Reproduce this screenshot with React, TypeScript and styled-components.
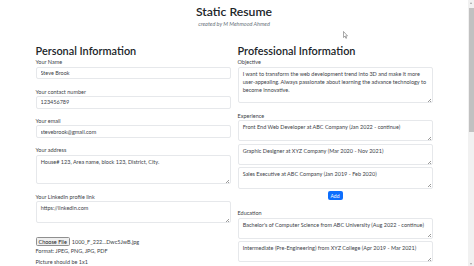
import React from 'react';
import styled, { createGlobalStyle } from 'styled-components';

const GlobalStyle = createGlobalStyle`
  html, body {
    margin: 0;
    padding: 0;
    background: #fff;
    overflow: hidden;
  }
  body {
    font-family: Lato, 'Open Sans', sans-serif;
    color: #212529;
  }
  * {
    box-sizing: border-box;
  }
`;

const Page = styled.div`
  position: relative;
  width: 474px;
  height: 266px;
  overflow: hidden;
`;

const Content = styled.main`
  width: 468px;
  padding-top: 5px;
`;

const Header = styled.header`
  text-align: center;
`;

const Title = styled.h1`
  margin: 0;
  font-size: 12.2px;
  line-height: 14px;
  font-weight: 600;
`;

const Byline = styled.p`
  margin: 1.8px 0 0;
  font-size: 5.5px;
  line-height: 7px;
  font-style: italic;
  color: #6c757d;
`;

const Columns = styled.div`
  width: 397px;
  margin: 16.9px auto 0;
  display: grid;
  grid-template-columns: 1fr 1fr;
  column-gap: 7px;
  align-items: start;
  color: #3d4349;
`;

const Column = styled.section`
  display: flex;
  flex-direction: column;
`;

const SectionTitle = styled.h2`
  margin: 0 0 1.8px;
  font-size: 10.9px;
  line-height: 12px;
  font-weight: 600;
  color: #212529;
`;

const Field = styled.div<{ $mb?: number }>`
  margin-bottom: ${(p) => p.$mb ?? 8.4}px;
`;

const Label = styled.label`
  display: block;
  font-size: 5.5px;
  line-height: 8.3px;
`;

const Input = styled.input`
  display: block;
  width: 100%;
  height: 12.6px;
  padding: 0 4px;
  border: 1px solid #e6e8eb;
  border-radius: 2px;
  font-family: inherit;
  font-size: 5.5px;
  color: #3d4349;
  background: #fff;
  outline: none;
`;

const Stack = styled.div`
  display: flex;
  flex-direction: column;
  gap: 2.3px;
`;

const AreaBox = styled.div`
  position: relative;

  &::after {
    content: '';
    position: absolute;
    right: 1.5px;
    bottom: 1.5px;
    width: 3px;
    height: 3px;
    background: linear-gradient(
      135deg,
      transparent 0 40%,
      #9a9a9a 40% 52%,
      transparent 52% 72%,
      #9a9a9a 72% 84%,
      transparent 84%
    );
  }
`;

const Area = styled.textarea<{ $h: number }>`
  display: block;
  width: 100%;
  height: ${(p) => p.$h}px;
  padding: 2.1px 4.2px;
  border: 1px solid #e6e8eb;
  border-radius: 2px;
  font-family: inherit;
  font-size: 5.5px;
  line-height: 8.3px;
  color: #3d4349;
  background: #fff;
  resize: none;
  overflow: hidden;
  white-space: pre;
  outline: none;
`;

const FileRow = styled.div`
  display: flex;
  align-items: center;
  gap: 2px;
  margin-top: 14px;
  font-size: 5.5px;
`;

const FileButton = styled.span`
  display: inline-flex;
  align-items: center;
  height: 9px;
  padding: 0 2px;
  border: 1px solid #8f8f8f;
  border-radius: 1.5px;
  background: #efefef;
  color: #222;
`;

const Hint = styled.div<{ $mt?: number }>`
  margin-top: ${(p) => p.$mt ?? 0}px;
  font-size: 5.5px;
  line-height: 7px;
`;

const AddButton = styled.button`
  align-self: center;
  width: 15px;
  height: 9.3px;
  margin: 2.5px 0 8.85px;
  padding: 0;
  border: none;
  border-radius: 2px;
  background: #0d6efd;
  color: #fff;
  font-family: inherit;
  font-size: 5px;
`;

const Cursor = styled.svg`
  position: absolute;
  left: 343px;
  top: 31px;
`;

const Scrollbar = styled.div`
  position: absolute;
  top: 0;
  right: 0;
  width: 6px;
  height: 266px;
  background: #f1f1f1;
  display: flex;
  flex-direction: column;
  align-items: center;
  justify-content: space-between;
  padding: 1.5px 0;
`;

const Arrow = styled.span<{ $down?: boolean }>`
  width: 0;
  height: 0;
  border-left: 1.5px solid transparent;
  border-right: 1.5px solid transparent;
  ${(p) => (p.$down ? 'border-top: 2px solid #a3a3a3;' : 'border-bottom: 2px solid #a3a3a3;')}
`;

const Thumb = styled.div`
  position: absolute;
  top: 8px;
  left: 0.5px;
  width: 5px;
  height: 124px;
  background: #c1c1c1;
`;

const TextArea = ({ h, value }: { h: number; value: string }) => (
  <AreaBox>
    <Area $h={h} value={value} readOnly />
  </AreaBox>
);

export default function App() {
  return (
    <Page>
      <GlobalStyle />
      <Content>
        <Header>
          <Title>Static Resume</Title>
          <Byline>created by M Mehmood Ahmed</Byline>
        </Header>
        <Columns>
          <Column>
            <SectionTitle>Personal Information</SectionTitle>
            <Field>
              <Label>Your Name</Label>
              <Input value="Steve Brook" readOnly />
            </Field>
            <Field>
              <Label>Your contact number</Label>
              <Input value="123456789" readOnly />
            </Field>
            <Field>
              <Label>Your email</Label>
              <Input value="stevebrook@gmail.com" readOnly />
            </Field>
            <Field>
              <Label>Your address</Label>
              <TextArea h={29.7} value="House# 123, Area name, block 123, District, City." />
            </Field>
            <Field $mb={0}>
              <Label>Your Linkedin profile link</Label>
              <TextArea h={22} value="https://linkedin.com" />
            </Field>
            <FileRow>
              <FileButton>Choose File</FileButton>
              <span>1000_F_222...Dwc5JwB.jpg</span>
            </FileRow>
            <Hint $mt={1.5}>Format: JPEG, PNG, JPG, PDF</Hint>
            <Hint $mt={4}>Picture should be 1x1</Hint>
          </Column>
          <Column>
            <SectionTitle>Professional Information</SectionTitle>
            <Field>
              <Label>Objective</Label>
              <TextArea
                h={36.7}
                value={
                  'I want to transform the web development trend into 3D and make it more\nuser-appealing. Always passionate about learning the advance technology to\nbecome innovative.'
                }
              />
            </Field>
            <Field $mb={0}>
              <Label>Experience</Label>
              <Stack>
                <TextArea h={21.3} value="Front End Web Developer at ABC Company (Jan 2022 - continue)" />
                <TextArea h={21.3} value="Graphic Designer at XYZ Company (Mar 2020 - Nov 2021)" />
                <TextArea h={21.3} value="Sales Executive at ABC Company (Jan 2019 - Feb 2020)" />
              </Stack>
            </Field>
            <AddButton>Add</AddButton>
            <Field $mb={0}>
              <Label>Education</Label>
              <Stack>
                <TextArea h={21.3} value="Bachelor's of Computer Science from ABC University (Aug 2022 - continue)" />
                <TextArea h={21.3} value="Intermediate (Pre-Engineering) from XYZ College (Apr 2019 - Mar 2021)" />
              </Stack>
            </Field>
          </Column>
        </Columns>
      </Content>
      <Cursor width="5" height="8" viewBox="0 0 5 8">
        <path d="M0.5 0.5 L0.5 6.5 L1.9 5.2 L2.9 7.4 L3.6 7.1 L2.7 4.9 L4.5 4.9 Z" fill="#fff" stroke="#555" strokeWidth="0.5" />
      </Cursor>
      <Scrollbar>
        <Arrow />
        <Thumb />
        <Arrow $down />
      </Scrollbar>
    </Page>
  );
}
